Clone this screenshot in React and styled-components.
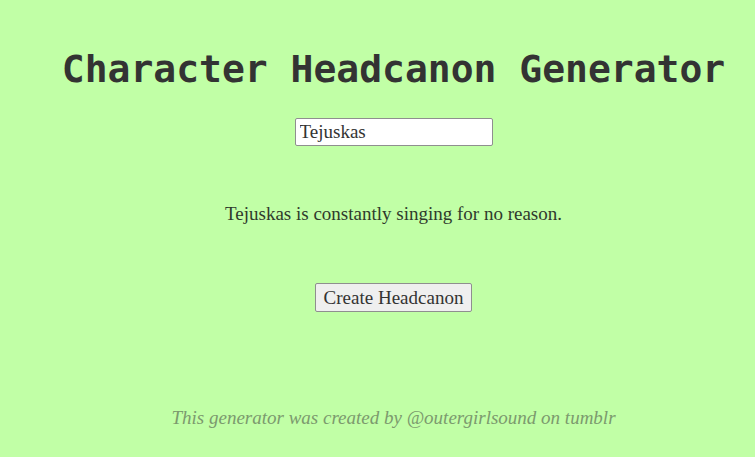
import React, { useState } from "react";
import styled, { createGlobalStyle } from "styled-components";

const GlobalStyle = createGlobalStyle`
  html, body {
    margin: 0;
    padding: 0;
    background-color: #c1ffa6;
  }
  body {
    font-family: "Liberation Serif", "Times New Roman", serif;
  }
`;

const Page = styled.div`
  min-height: 457px;
  padding: 0 8px 0 40px;
  box-sizing: border-box;
  display: flex;
  flex-direction: column;
  align-items: center;
  text-align: center;
`;

const Title = styled.h1`
  margin: 46px 0 0;
  font-family: "DejaVu Sans Mono", "Liberation Mono", monospace;
  font-weight: bold;
  font-size: 38px;
  line-height: 46px;
  color: #333333;
`;

const NameInput = styled.input`
  margin-top: 26px;
  width: 198px;
  height: 28px;
  box-sizing: border-box;
  padding: 1px 4px;
  font-family: "Liberation Serif", "Times New Roman", serif;
  font-size: 19px;
  color: #333;
  background: #ffffff;
  border: 1px solid #8f8f8f;
  border-radius: 2px;
`;

const Result = styled.p`
  margin: 56px 0 0;
  font-size: 19px;
  line-height: 24px;
  color: #2f3a2c;
`;

const Button = styled.button`
  margin-top: 57px;
  height: 29px;
  padding: 0 8px;
  font-family: "Liberation Serif", "Times New Roman", serif;
  font-size: 19px;
  color: #333;
  background: #efefef;
  border: 1px solid #8f8f8f;
  border-radius: 2px;
  cursor: pointer;
`;

const Credit = styled.p`
  margin: 94px 0 0;
  font-style: italic;
  font-size: 19px;
  line-height: 24px;
  color: #7c9a6e;
`;

const headcanons = [
  "is constantly singing for no reason.",
  "secretly loves bad puns.",
  "can't sleep without a nightlight.",
  "collects weird-looking rocks.",
];

export default function App() {
  const [name, setName] = useState("Tejuskas");
  const [index, setIndex] = useState(0);

  return (
    <>
      <GlobalStyle />
      <Page>
        <Title>Character Headcanon Generator</Title>
        <NameInput value={name} onChange={(e) => setName(e.target.value)} />
        <Result>
          {name} {headcanons[index]}
        </Result>
        <Button onClick={() => setIndex((index + 1) % headcanons.length)}>
          Create Headcanon
        </Button>
        <Credit>This generator was created by @outergirlsound on tumblr</Credit>
      </Page>
    </>
  );
}
